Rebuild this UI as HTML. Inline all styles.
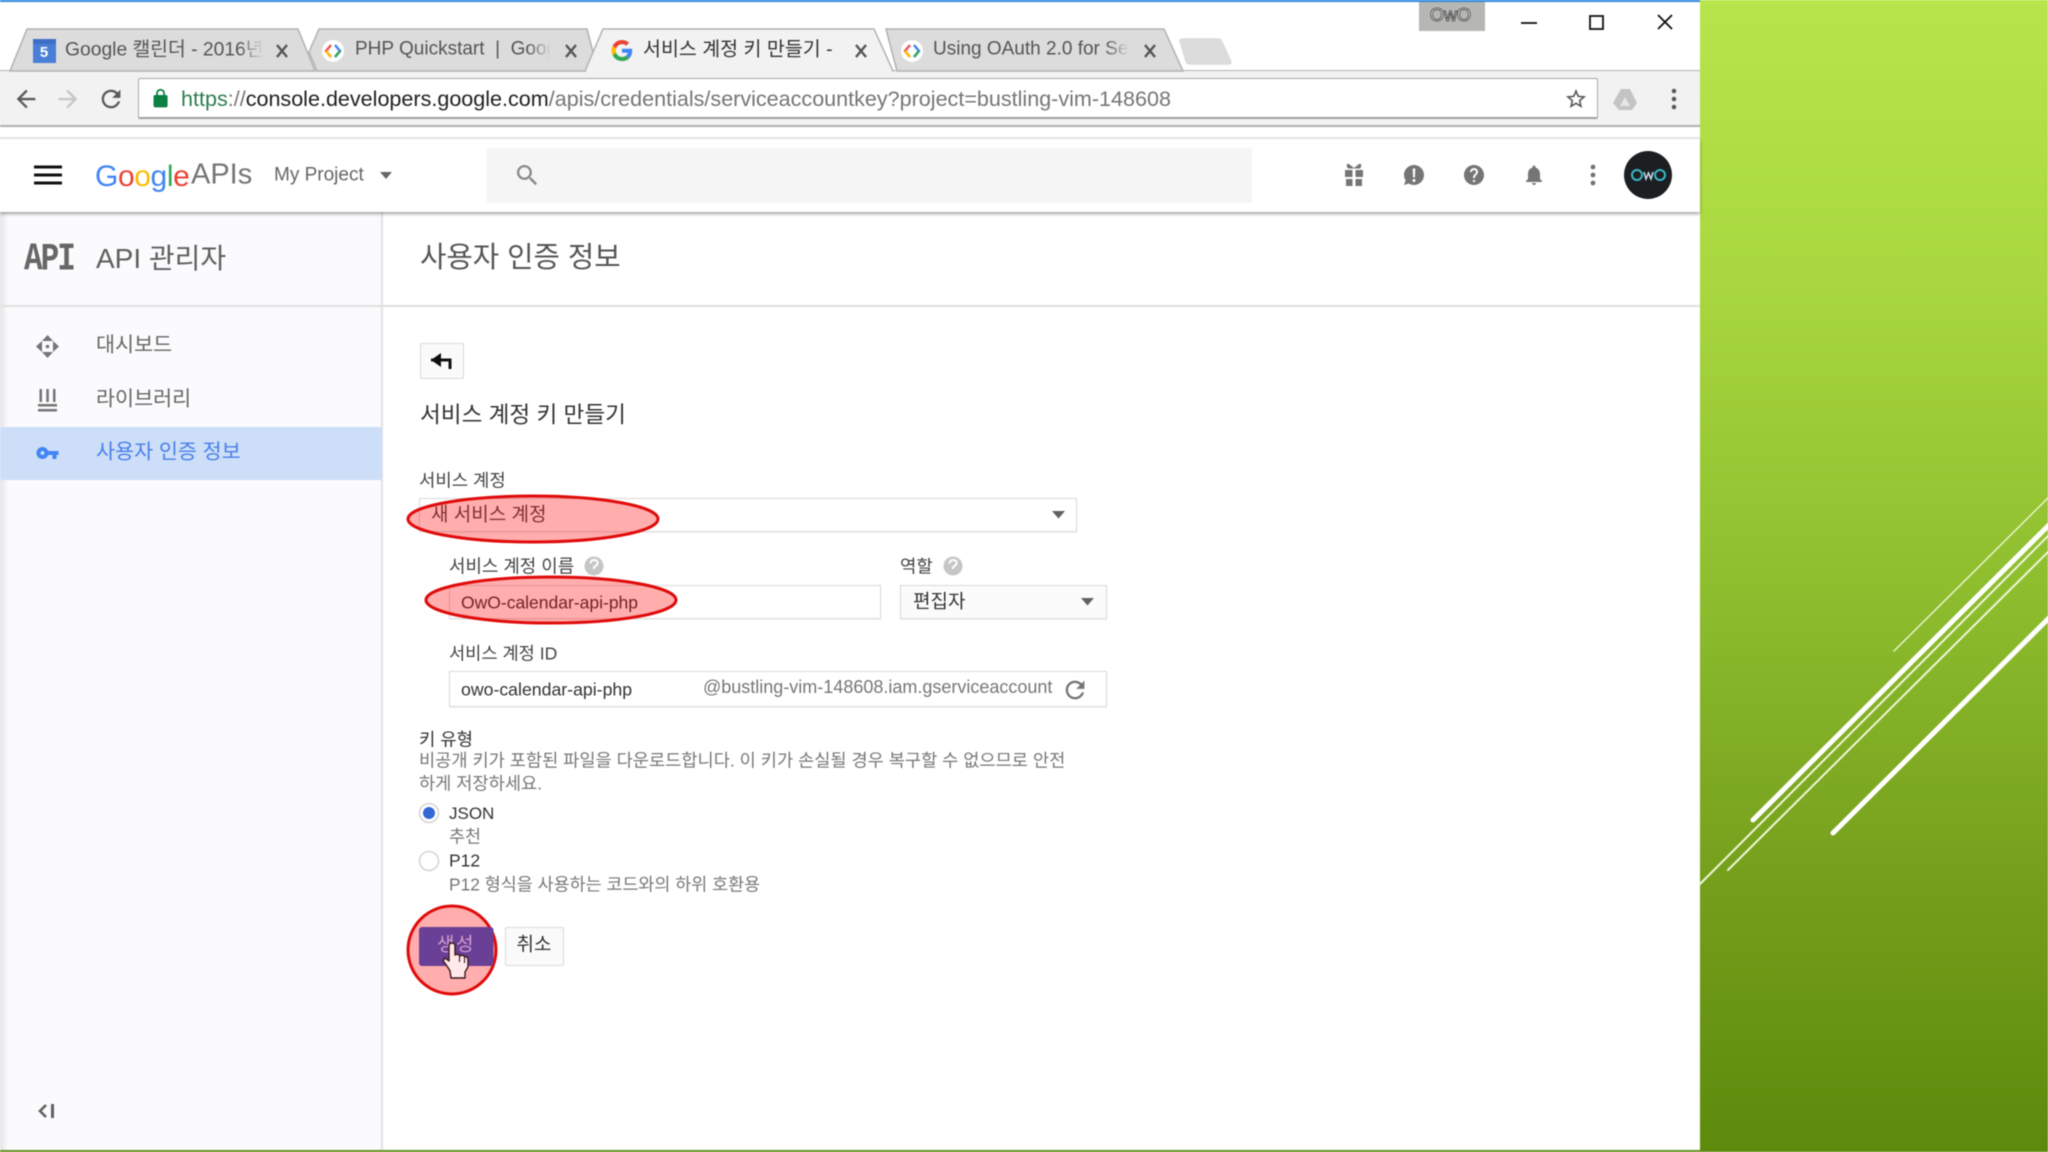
<!DOCTYPE html>
<html lang="ko"><head><meta charset="utf-8"><title>서비스 계정 키 만들기</title>
<style>
html,body{margin:0;padding:0;background:#fff}
#p{position:relative;width:2048px;height:1152px;overflow:hidden;background:#fff;font-family:"Liberation Sans","Noto Sans CJK KR",sans-serif;color:#212121;filter:blur(.45px)}
#g{position:absolute;left:1700px;top:0;width:348px;height:1152px;background:linear-gradient(180deg,#b6e64b 0%,#a8d73f 25%,#8fbf2f 50%,#76a11d 75%,#5e8a0c 100%)}
.b{position:absolute;box-sizing:border-box}
.t{position:absolute;white-space:nowrap;transform:translateY(calc(-50% + 2px));line-height:1.2}
.c{transform:translate(-50%,calc(-50% + 1px))}
.i{background:#fff;border:1px solid #d9d9d9;box-shadow:0 1px 1px rgba(0,0,0,.06)}
.f{-webkit-mask-image:linear-gradient(90deg,#000 88%,transparent);mask-image:linear-gradient(90deg,#000 88%,transparent);overflow:hidden}
svg{position:absolute;left:0;top:0}
</style></head><body>
<div id="p">
<div id="g"></div>
<div class="b" style="left:0;top:0;width:1700px;height:1150px;background:#fff"></div>
<div class="b" style="left:0;top:1150px;width:1700px;height:2px;background:#5f8f1a"></div>
<div class="b" style="left:0;top:0;width:1700px;height:2px;background:#2a88dc"></div>
<!-- toolbar -->
<div class="b" style="left:0;top:70px;width:1700px;height:57px;background:#f2f2f2;border-top:1px solid #b4b4b4;border-bottom:2px solid #b0b0b0"></div>
<div class="b" style="left:0;top:137px;width:1700px;height:2px;background:#e6e6e6"></div>
<div class="b" style="left:138px;top:78px;width:1460px;height:41px;background:#fff;border:1px solid #a8a8a8;border-bottom:2px solid #a0a0a0;border-radius:2px"></div>
<!-- sidebar -->
<div class="b" style="left:0;top:212px;width:383px;height:938px;background:#fbfafc;border-right:2px solid #e2e2e2"></div>
<div class="b" style="left:0;top:212px;width:8px;height:938px;background:linear-gradient(90deg,#e4e4e4,rgba(250,250,250,0))"></div>
<div class="b" style="left:0;top:305px;width:1700px;height:2px;background:#e0e0e0"></div>
<div class="b" style="left:0;top:427px;width:382px;height:53px;background:#cddef8"></div>
<!-- header -->
<div class="b" style="left:0;top:139px;width:1700px;height:73px;background:#fff;box-shadow:0 2px 3px rgba(0,0,0,.35)"></div>
<div class="b" style="left:487px;top:148px;width:765px;height:55px;background:#f5f5f5"></div>
<!-- OwO badge -->
<div class="b" style="left:1419px;top:2px;width:66px;height:29px;background:#b6b6b4"></div>
<div class="t" style="left:1430px;top:14px;font-size:18px;color:#fff;-webkit-text-stroke:.8px #333">OwO</div>

<svg width="2048" height="1152" viewBox="0 0 2048 1152" xmlns="http://www.w3.org/2000/svg">
 <!-- background lines -->
 <g stroke="#fff" stroke-linecap="round" fill="none">
  <path d="M1894 651L2050 496" stroke-width="1.5" stroke="#e8f3c8"/>
  <path d="M1753 820L2050 524" stroke-width="5"/>
  <path d="M1700 884L2050 534" stroke-width="2" stroke="#eef6d6"/>
  <path d="M1728 870L2050 550" stroke-width="2" stroke="#eef6d6"/>
  <path d="M1833 833L2050 617" stroke-width="5"/>
 </g>
 <!-- tabs -->
 <g stroke="#b2b2b2" stroke-width="1.5" fill="#dcdcdc">
  <path d="M1180 41Q1180 39 1183 39H1218Q1221 39 1222 42L1231 62Q1231 64 1228 64H1190Q1187 64 1186 61Z" stroke="#dadada"/>
  <path d="M886 29H1164L1183 71H897Z"/>
  <path d="M317 71L309 52L319 29H587L598 71Z"/>
  <path d="M10 71L27 29H298L315 71Z"/>
  <path d="M585 71L603 29H874L893 71Z" fill="#f2f2f2"/>
 </g>
 <path d="M586 71H892" stroke="#f2f2f2" stroke-width="2.5"/>
 <!-- tab 1 favicon -->
 <rect x="33" y="39" width="23" height="24" fill="#4a7fd8"/><rect x="33" y="39" width="23" height="5" fill="#3f6fc4"/>
 <!-- chromium-ish favicons -->
 <g id="cd">
  <circle cx="333" cy="51" r="11" fill="#fff"/>
  <path d="M331 45L326 51L331 57" stroke="#e55" stroke-width="2.500" fill="none"/>
  <path d="M335 45L340 51L335 57" stroke="#4285f4" stroke-width="2.500" fill="none"/>
  <path d="M326 51L331 57" stroke="#fbbc05" stroke-width="2.500"/>
  <path d="M340 51L335 57" stroke="#34a853" stroke-width="2.500"/>
 </g>
 <g transform="translate(579,0)">
  <circle cx="333" cy="51" r="11" fill="#fff"/>
  <path d="M331 45L326 51L331 57" stroke="#e55" stroke-width="2.500" fill="none"/>
  <path d="M335 45L340 51L335 57" stroke="#4285f4" stroke-width="2.500" fill="none"/>
  <path d="M326 51L331 57" stroke="#fbbc05" stroke-width="2.500"/>
  <path d="M340 51L335 57" stroke="#34a853" stroke-width="2.500"/>
 </g>
 <!-- Google G -->
 <g transform="translate(611.500,40) scale(.44)">
  <path fill="#EA4335" d="M24 9.500c3.540 0 6.710 1.220 9.210 3.600l6.850-6.850C35.900 2.380 30.470 0 24 0 14.620 0 6.510 5.380 2.560 13.220l7.980 6.190C12.430 13.720 17.740 9.500 24 9.500z"/>
  <path fill="#4285F4" d="M46.980 24.550c0-1.570-.15-3.090-.38-4.550H24v9.020h12.940c-.58 2.960-2.260 5.480-4.780 7.180l7.730 6c4.510-4.180 7.090-10.360 7.090-17.650z"/>
  <path fill="#FBBC05" d="M10.530 28.590c-.48-1.450-.76-2.990-.76-4.590s.27-3.140.76-4.590l-7.980-6.190C.92 16.460 0 20.120 0 24c0 3.880.92 7.540 2.560 10.780l7.970-6.190z"/>
  <path fill="#34A853" d="M24 48c6.480 0 11.930-2.130 15.890-5.810l-7.730-6c-2.150 1.450-4.920 2.300-8.160 2.300-6.260 0-11.570-4.220-13.470-9.910l-7.980 6.190C6.510 42.620 14.620 48 24 48z"/>
 </g>
 <!-- tab close -->
 <g stroke="#555" stroke-width="2.400" fill="none">
  <path d="M277 45L287 57M287 45L277 57"/><path d="M566 45L576 57M576 45L566 57"/>
  <path d="M856 45L866 57M866 45L856 57"/><path d="M1145 45L1155 57M1155 45L1145 57"/>
 </g>
 <!-- window controls -->
 <g stroke="#111" fill="none" stroke-width="1.800">
  <path d="M1521 23H1537"/><rect x="1590" y="16" width="13" height="13"/><path d="M1658 15L1672 29M1672 15L1658 29"/>
 </g>
 <!-- nav -->
 <g fill="#5a5a5a">
  <path transform="translate(12,85) scale(1.170)" d="M20 11H7.830l5.590-5.590L12 4l-8 8 8 8 1.410-1.410L7.830 13H20v-2z"/>
  <path transform="translate(82,85) scale(-1.170,1.170)" fill="#c6c6c6" d="M20 11H7.830l5.590-5.590L12 4l-8 8 8 8 1.410-1.410L7.830 13H20v-2z"/>
  <path transform="translate(97,85) scale(1.170)" d="M17.650 6.350C16.200 4.900 14.210 4 12 4c-4.420 0-7.990 3.580-7.990 8s3.570 8 7.990 8c3.730 0 6.840-2.550 7.730-6h-2.080c-.82 2.330-3.040 4-5.650 4-3.310 0-6-2.690-6-6s2.690-6 6-6c1.660 0 3.140.69 4.220 1.780L13 11h7V4l-2.350 2.350z"/>
  <path transform="translate(150,88) scale(.88)" fill="#0b8043" d="M18 8h-1V6c0-2.760-2.240-5-5-5S7 3.240 7 6v2H6c-1.100 0-2 .9-2 2v10c0 1.100.9 2 2 2h12c1.100 0 2-.9 2-2V10c0-1.100-.9-2-2-2zM9 6c0-1.660 1.340-3 3-3s3 1.340 3 3v2H9V6z"/>
  <path transform="translate(1564,87) scale(1)" d="M22 9.240l-7.190-.62L12 2 9.190 8.630 2 9.240l5.460 4.730L5.820 21 12 17.270 18.180 21l-1.630-7.030L22 9.240zM12 15.400l-3.760 2.270 1-4.280-3.320-2.880 4.380-.38L12 6.100l1.710 4.040 4.380.38-3.320 2.880 1 4.280L12 15.400z"/>
  <path d="M1621 89H1630L1637 103L1632 110H1619L1613 103Z" fill="#c4c4c4"/><path d="M1625 97L1630 106H1620Z" fill="#e8e8e8"/>
  <circle cx="1674" cy="91" r="2.300"/><circle cx="1674" cy="99" r="2.300"/><circle cx="1674" cy="107" r="2.300"/>
 </g>
 <!-- hamburger -->
 <path d="M34 167H62M34 175H62M34 183H62" stroke="#111" stroke-width="3"/>
 <path d="M380 172H392L386 179Z" fill="#666"/>
 <path transform="translate(513.500,161.500) scale(1.150)" fill="#888" d="M15.500 14h-.79l-.28-.27C15.410 12.590 16 11.110 16 9.500 16 5.910 13.090 3 9.500 3S3 5.910 3 9.500 5.910 16 9.500 16c1.610 0 3.090-.59 4.230-1.570l.27.28v.79l5 4.990L20.490 19l-4.990-5zm-6 0C7.010 14 5 11.990 5 9.500S7.010 5 9.500 5 14 7.010 14 9.500 11.990 14 9.500 14z"/>
 <!-- header icons -->
 <g fill="#757575">
  <path d="M1345 170H1352.500V177H1345ZM1355.500 170H1363V177H1355.500ZM1346 179H1352.500V186H1346ZM1355.500 179H1362V186H1355.500Z"/>
  <path d="M1347 167Q1346 163 1349 164L1354 168L1359 164Q1362 163 1361 167L1360 168.500H1348Z"/>
  <path transform="translate(1402,163)" d="M12 2C6.500 2 2 6.500 2 12c0 2 .6 3.800 1.600 5.400L2 22l4.800-1.500C8.300 21.400 10.100 22 12 22c5.500 0 10-4.500 10-10S17.500 2 12 2zm-1.300 3.500h2.600l-.4 9h-1.800zM12 19a1.500 1.500 0 1 1 0-3 1.500 1.500 0 0 1 0 3z"/>
  <path transform="translate(1462,163)" d="M12 2C6.480 2 2 6.480 2 12s4.480 10 10 10 10-4.480 10-10S17.520 2 12 2zm1 17h-2v-2h2v2zm2.070-7.750l-.9.920C13.450 12.900 13 13.500 13 15h-2v-.5c0-1.100.45-2.100 1.170-2.830l1.240-1.260c.37-.36.59-.86.59-1.410 0-1.100-.9-2-2-2s-2 .9-2 2H8c0-2.210 1.790-4 4-4s4 1.790 4 4c0 .88-.36 1.680-.93 2.250z"/>
  <path transform="translate(1522,163)" d="M12 22c1.100 0 2-.9 2-2h-4c0 1.100.89 2 2 2zm6-6v-5c0-3.070-1.640-5.640-4.500-6.320V4c0-.83-.67-1.500-1.500-1.500s-1.500.67-1.500 1.500v.68C7.630 5.360 6 7.920 6 11v5l-2 2v1h16v-1l-2-2z"/>
  <circle cx="1593" cy="167" r="2.400"/><circle cx="1593" cy="175" r="2.400"/><circle cx="1593" cy="183" r="2.400"/>
 </g>
 <circle cx="1648" cy="175" r="24" fill="#1c1f22"/>
 <g fill="none" stroke="#39b8c6" stroke-width="2"><circle cx="1637" cy="175" r="5"/><circle cx="1660" cy="175" r="5"/><path d="M1644 172L1646 179L1648.500 173L1651 179L1653 172" stroke="#cde" stroke-width="1.500"/></g>
 <!-- sidebar icons -->
 <g fill="#757575">
  <path d="M47.500 335L53 341H42ZM47.500 358L42 352H53ZM36 346.500L42 341V352ZM59 346.500L53 341V352Z"/>
  <circle cx="47.500" cy="346.500" r="4" fill="#fbfafc"/>
  <circle cx="47.500" cy="346.500" r="1.800"/>
  <path d="M39.500 389H42V402H39.500ZM46.300 389H48.800V402H46.300ZM53 389H55.500V402H53ZM38 404H57V406.500H38ZM38 409H57V411.500H38Z"/>
  <path transform="translate(35.500,441) scale(1)" fill="#4285f4" d="M12.650 10C11.830 7.670 9.610 6 7 6c-3.310 0-6 2.690-6 6s2.690 6 6 6c2.610 0 4.830-1.670 5.650-4H17v4h4v-4h2v-4H12.650zM7 14c-1.100 0-2-.9-2-2s.9-2 2-2 2 .9 2 2-.9 2-2 2z"/>
  <path d="M46 1105L40 1111L46 1117" fill="none" stroke="#616161" stroke-width="2.600"/><rect x="51" y="1104" width="3" height="14" fill="#616161"/>
 </g>
</svg>

<!-- tab text -->
<div class="t f" style="left:65px;top:48px;width:198px;font-size:19.300px;color:#555">Google 캘린더 - 2016년</div>
<div class="t f" style="left:355px;top:48px;width:196px;font-size:19px;color:#555">PHP Quickstart &nbsp;|&nbsp; Google</div>
<div class="t" style="left:643px;top:48px;font-size:19.500px;color:#333">서비스 계정 키 만들기 -</div>
<div class="t f" style="left:933px;top:48px;width:196px;font-size:19px;color:#555">Using OAuth 2.0 for Server</div>
<div class="t c" style="left:44px;top:52px;font-size:15px;font-weight:bold;color:#fff">5</div>
<!-- URL -->
<div class="t" style="left:181px;top:97px;font-size:21.550px;color:#757575"><span style="color:#2e7d4f">https</span>://<span style="color:#212121">console.developers.google.com</span>/apis/credentials/serviceaccountkey?project=bustling-vim-148608</div>
<!-- logo -->
<div class="t" style="left:95px;top:175px;font-size:30px;letter-spacing:-.4px"><span style="color:#4285f4">G</span><span style="color:#ea4335">o</span><span style="color:#fbbc05">o</span><span style="color:#4285f4">g</span><span style="color:#34a853">l</span><span style="color:#ea4335">e</span></div>
<div class="t" style="left:191px;top:173px;font-size:29px;color:#757575">APIs</div>
<div class="t" style="left:274px;top:174px;font-size:19px;color:#666">My Project</div>
<!-- sidebar text -->
<div class="t" style="left:24px;top:258px;font-family:'Liberation Mono',monospace;font-weight:bold;font-size:31px;color:#666;letter-spacing:-2px;transform:translateY(calc(-50% + 2px)) scaleY(1.250)">API</div>
<div class="t" style="left:96px;top:257px;font-size:28px;color:#5f5f5f">API 관리자</div>
<div class="t" style="left:96px;top:344px;font-size:20.700px;color:#666">대시보드</div>
<div class="t" style="left:96px;top:398px;font-size:20.700px;color:#666">라이브러리</div>
<div class="t" style="left:96px;top:451px;font-size:20.700px;color:#4a80e8">사용자 인증 정보</div>
<!-- main -->
<div class="t" style="left:420px;top:256px;font-size:28.700px;color:#555">사용자 인증 정보</div>
<div class="b" style="left:420px;top:343px;width:44px;height:36px;background:#fafafa;border:1px solid #d8d8d8;border-radius:2px"></div>
<svg width="2048" height="1152" viewBox="0 0 2048 1152" style="pointer-events:none"><path d="M431 360H450V369" fill="none" stroke="#111" stroke-width="3"/><path d="M441 353L431 360L441 367Z" fill="#111"/></svg>
<div class="t" style="left:420px;top:413px;font-size:22.600px;color:#333">서비스 계정 키 만들기</div>
<div class="t" style="left:419px;top:479px;font-size:17.800px;color:#444">서비스 계정</div>
<div class="b i" style="left:419px;top:498px;width:658px;height:34px"></div>
<div class="t" style="left:431px;top:514px;font-size:19px;color:#444">새 서비스 계정</div>
<div class="t" style="left:449px;top:565px;font-size:17.900px;color:#444">서비스 계정 이름</div>
<div class="t" style="left:900px;top:565px;font-size:17.800px;color:#444">역할</div>
<div class="b i" style="left:449px;top:585px;width:432px;height:34px"></div>
<div class="t" style="left:461px;top:601px;font-size:17.500px;color:#333">OwO-calendar-api-php</div>
<div class="b i" style="left:900px;top:585px;width:207px;height:34px;background:#fbfbfb"></div>
<div class="t" style="left:913px;top:601px;font-size:19px;color:#333">편집자</div>
<div class="t" style="left:449px;top:652px;font-size:17.600px;color:#444">서비스 계정 ID</div>
<div class="b i" style="left:449px;top:671px;width:658px;height:36px"></div>
<div class="t" style="left:461px;top:688px;font-size:17.700px;color:#333">owo-calendar-api-php</div>
<div class="t" style="left:703px;top:686px;font-size:18px;color:#777">@bustling-vim-148608.iam.gserviceaccount</div>
<div class="t" style="left:419px;top:738px;font-size:17.800px;color:#333">키 유형</div>
<div class="t" style="left:419px;top:759px;font-size:17.600px;color:#777">비공개 키가 포함된 파일을 다운로드합니다. 이 키가 손실될 경우 복구할 수 없으므로 안전</div>
<div class="t" style="left:419px;top:782px;font-size:17.600px;color:#777">하게 저장하세요.</div>
<div class="t" style="left:449px;top:812px;font-size:17px;color:#333">JSON</div>
<div class="t" style="left:449px;top:835px;font-size:17.400px;color:#777">추천</div>
<div class="t" style="left:449px;top:859px;font-size:17.500px;color:#333">P12</div>
<div class="t" style="left:449px;top:883px;font-size:17.400px;color:#777">P12 형식을 사용하는 코드와의 하위 호환용</div>
<div class="b" style="left:505px;top:927px;width:59px;height:39px;background:#fafafa;border:1px solid #d8d8d8;border-radius:2px"></div>
<div class="t c" style="left:534px;top:945px;font-size:19px;color:#333">취소</div>

<svg width="2048" height="1152" viewBox="0 0 2048 1152">
 <path d="M1052 511H1065L1058.500 518.500Z" fill="#616161"/>
 <path d="M1081 598H1094L1087.500 605.500Z" fill="#616161"/>
 <g fill="#c6c6c6"><circle cx="594" cy="566" r="9.500"/><circle cx="953" cy="566" r="9.500"/></g>
 <g fill="none" stroke="#fff" stroke-width="2"><path d="M590.500 563.500Q591 560 594 560Q598 560 597.500 563.500Q597 565.500 594 567V569"/><path d="M949.500 563.500Q950 560 953 560Q957 560 956.500 563.500Q956 565.500 953 567V569"/></g>
 <path transform="translate(1061,676) scale(1.170)" fill="#757575" d="M17.650 6.350C16.200 4.900 14.210 4 12 4c-4.420 0-7.990 3.580-7.990 8s3.570 8 7.990 8c3.730 0 6.840-2.550 7.730-6h-2.080c-.82 2.330-3.040 4-5.650 4-3.310 0-6-2.690-6-6s2.690-6 6-6c1.660 0 3.140.69 4.220 1.780L13 11h7V4l-2.350 2.350z"/>
 <!-- radios -->
 <circle cx="429" cy="813" r="9.500" fill="#fff" stroke="#d4d4d4" stroke-width="1.500"/><circle cx="429" cy="813" r="6" fill="#3367d6"/>
 <circle cx="429" cy="861" r="9.500" fill="#fff" stroke="#d4d4d4" stroke-width="1.500"/>
 <!-- highlight ellipses -->
 <g fill="rgba(255,0,0,.32)" stroke="#e00b0b" stroke-width="3">
  <ellipse cx="533" cy="519" rx="125" ry="23"/>
  <ellipse cx="551" cy="600" rx="125" ry="23"/>
  <ellipse cx="452" cy="950" rx="44" ry="44"/>
 </g>
 <!-- generate button -->
 <rect x="419" y="927" width="74.500" height="39" rx="3" fill="#6a3f96"/>
</svg>
<div class="t c" style="left:456px;top:945px;font-size:19px;color:#d39ccf;z-index:1;letter-spacing:1.500px">생성</div>
<svg width="2048" height="1152" viewBox="0 0 2048 1152" style="z-index:2">
 <path d="M450 971Q446 964 443 961L445 958L449 961V946Q449 943 452 943Q455 943 455 946V955Q458 953 460 956Q463 954 465 957Q468 956 468 960V967L465 972V978H451Z" fill="#ffe9ea" stroke="#3a1a1a" stroke-width="1.400" stroke-linejoin="round"/>
 <path d="M459.500 956V962M464.500 957V963" stroke="#3a1a1a" stroke-width="1.100"/>
</svg>
</div>
</body></html>
